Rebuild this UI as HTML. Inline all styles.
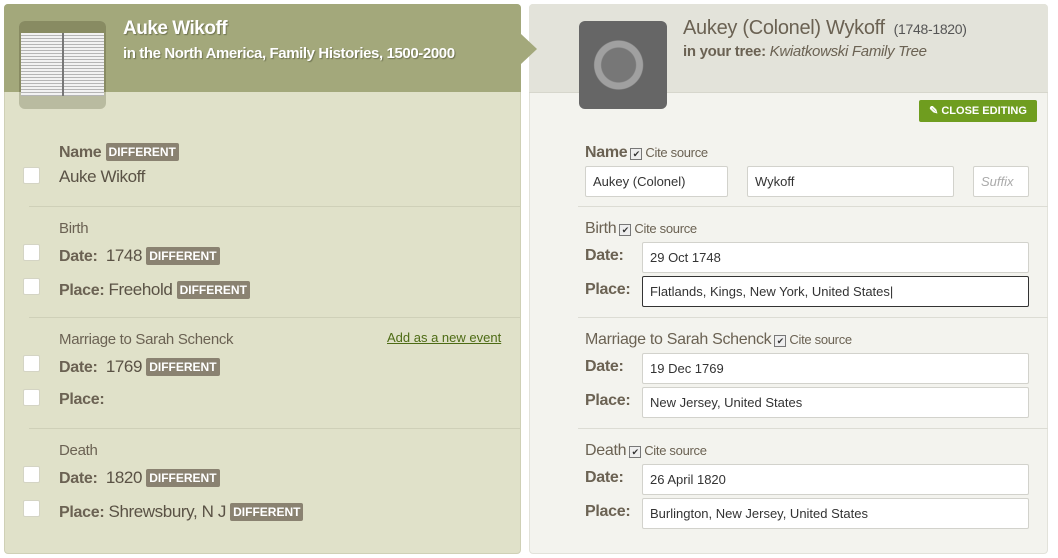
<!DOCTYPE html>
<html><head><style>
body{margin:0;width:1058px;height:558px;background:#fff;font-family:"Liberation Sans",sans-serif;position:relative;overflow:hidden}
.a{position:absolute;white-space:nowrap}
.lp{left:4px;top:4px;width:517px;height:550px;background:#e0e1c9;border-radius:4px;border:1px solid #cfd0b6;box-sizing:border-box}
.lh{left:4px;top:4px;width:517px;height:88px;background:#a3a87b;border-radius:4px 4px 0 0}
.rp{left:529px;top:4px;width:519px;height:550px;background:#f3f3ee;border-radius:4px;border:1px solid #e2e2da;box-sizing:border-box}
.rh{left:529px;top:4px;width:519px;height:88px;background:#e3e3da;border-radius:4px 4px 0 0;border-bottom:1px solid #d6d6cc}
.lbl{font-size:16px;font-weight:bold;color:#6b6253;letter-spacing:-0.3px}
.val{font-size:17px;color:#5a5245;letter-spacing:-0.4px}
.sec{font-size:15px;color:#6b6253;letter-spacing:-0.3px}
.diff{display:inline-block;background:#8a8271;color:#fff;font-size:12px;font-weight:bold;padding:2px 3px;border-radius:2px;vertical-align:1px;letter-spacing:0}
.cb{width:17px;height:17px;background:#fff;border:1px solid #d4d4c4;border-radius:2px;box-sizing:border-box}
.hr{height:1px;background:#cfd0b8}
.hr2{height:1px;background:#dcdcd4}
.in{background:#fff;border:1px solid #d2d2cc;border-radius:2px;box-sizing:border-box;font-size:13px;color:#333;padding:0 7px;line-height:30px;height:31px}
.cs{font-size:13px;color:#6b6253;font-weight:normal}
.ck{display:inline-block;width:10px;height:10px;border:1px solid #777;background:#eee;font-size:9px;line-height:10px;text-align:center;color:#333;vertical-align:0;margin:0 3px;font-weight:normal}
</style></head><body>
<div class="a lp"></div><div class="a lh"></div>
<div class="a rp"></div><div class="a rh"></div>
<svg class="a" style="left:521px;top:34px" width="18" height="30"><path d="M0 0 L16 15 L0 30Z" fill="#a3a87b"/></svg>
<div class="a" style="left:19px;top:21px;width:87px;height:88px;background:#b9bba0;border-radius:6px"></div>
<div class="a" style="left:19px;top:21px;width:87px;height:71px;background:#888b62;border-radius:6px 6px 0 0"></div>
<div class="a" style="left:21px;top:33px;width:83px;height:63px;background:repeating-linear-gradient(#f2f2f2 0 2px,#b5b5b5 2px 3px)"></div>
<div class="a" style="left:62px;top:33px;width:2px;height:63px;background:#777"></div>
<div class="a" style="left:123px;top:18px;font-size:19px;font-weight:bold;color:#fff;text-shadow:1px 1px 1px #6f7350;letter-spacing:-0.5px">Auke Wikoff</div>
<div class="a" style="left:123px;top:45px;font-size:15px;font-weight:bold;color:#fff;text-shadow:1px 1px 1px #6f7350;letter-spacing:-0.4px">in the North America, Family Histories, 1500-2000</div>
<div class="a" style="left:579px;top:21px;width:88px;height:88px;border-radius:6px;background:radial-gradient(circle at 45% 50%,#777 0 17px,#a0a0a0 18px 24px,#666 25px)"></div>
<div class="a" style="left:683px;top:17px;font-size:20px;color:#6b6253;letter-spacing:-0.3px">Aukey (Colonel) Wykoff <span style="font-size:14px;color:#555">&nbsp;(1748-1820)</span></div>
<div class="a" style="left:683px;top:43px;font-size:15px;font-weight:bold;color:#6b6253;letter-spacing:-0.3px">in your tree: <i style="font-weight:normal">Kwiatkowski Family Tree</i></div>
<div class="a" style="left:919px;top:100px;width:118px;height:22px;background:#6f9d1f;border-radius:2px;color:#fff;font-size:11px;font-weight:bold;line-height:22px;text-align:center">✎ CLOSE EDITING</div>
<div class="a lbl" style="left:59px;top:143px">Name <span class="diff">DIFFERENT</span></div>
<div class="a cb" style="left:23px;top:167px"></div>
<div class="a val" style="left:59px;top:167px">Auke Wikoff</div>
<div class="a hr" style="left:29px;top:206px;width:492px"></div>
<div class="a sec" style="left:59px;top:220px">Birth</div>
<div class="a cb" style="left:23px;top:244px"></div>
<div class="a lbl" style="left:59px;top:246px">Date:&nbsp; <span class="val" style="font-weight:normal">1748</span> <span class="diff">DIFFERENT</span></div>
<div class="a cb" style="left:23px;top:278px"></div>
<div class="a lbl" style="left:59px;top:280px">Place: <span class="val" style="font-weight:normal">Freehold</span> <span class="diff">DIFFERENT</span></div>
<div class="a hr" style="left:29px;top:317px;width:492px"></div>
<div class="a sec" style="left:59px;top:331px">Marriage to Sarah Schenck</div>
<div class="a" style="left:387px;top:330px;font-size:13px;color:#4d6b14;text-decoration:underline">Add as a new event</div>
<div class="a cb" style="left:23px;top:355px"></div>
<div class="a lbl" style="left:59px;top:357px">Date:&nbsp; <span class="val" style="font-weight:normal">1769</span> <span class="diff">DIFFERENT</span></div>
<div class="a cb" style="left:23px;top:389px"></div>
<div class="a lbl" style="left:59px;top:391px">Place:</div>
<div class="a hr" style="left:29px;top:428px;width:492px"></div>
<div class="a sec" style="left:59px;top:442px">Death</div>
<div class="a cb" style="left:23px;top:466px"></div>
<div class="a lbl" style="left:59px;top:468px">Date:&nbsp; <span class="val" style="font-weight:normal">1820</span> <span class="diff">DIFFERENT</span></div>
<div class="a cb" style="left:23px;top:500px"></div>
<div class="a lbl" style="left:59px;top:502px">Place: <span class="val" style="font-weight:normal">Shrewsbury, N J</span> <span class="diff">DIFFERENT</span></div>
<div class="a lbl" style="left:585px;top:144px">Name<span class="ck">✔</span><span class="cs">Cite source</span></div>
<div class="a in" style="left:585px;top:166px;width:143px">Aukey (Colonel)</div>
<div class="a in" style="left:747px;top:166px;width:207px">Wykoff</div>
<div class="a in" style="left:973px;top:166px;width:56px;color:#aaa;font-style:italic">Suffix</div>
<div class="a hr2" style="left:578px;top:206px;width:470px"></div>
<div class="a lbl" style="left:585px;top:220px;font-weight:normal">Birth<span class="ck">✔</span><span class="cs">Cite source</span></div>
<div class="a lbl" style="left:585px;top:247px">Date:</div>
<div class="a in" style="left:642px;top:242px;width:387px">29 Oct 1748</div>
<div class="a lbl" style="left:585px;top:281px">Place:</div>
<div class="a in" style="left:642px;top:276px;width:387px;border-color:#333">Flatlands, Kings, New York, United States|</div>
<div class="a hr2" style="left:578px;top:317px;width:470px"></div>
<div class="a lbl" style="left:585px;top:331px;font-weight:normal">Marriage to Sarah Schenck<span class="ck">✔</span><span class="cs">Cite source</span></div>
<div class="a lbl" style="left:585px;top:358px">Date:</div>
<div class="a in" style="left:642px;top:353px;width:387px">19 Dec 1769</div>
<div class="a lbl" style="left:585px;top:392px">Place:</div>
<div class="a in" style="left:642px;top:387px;width:387px">New Jersey, United States</div>
<div class="a hr2" style="left:578px;top:428px;width:470px"></div>
<div class="a lbl" style="left:585px;top:442px;font-weight:normal">Death<span class="ck">✔</span><span class="cs">Cite source</span></div>
<div class="a lbl" style="left:585px;top:469px">Date:</div>
<div class="a in" style="left:642px;top:464px;width:387px">26 April 1820</div>
<div class="a lbl" style="left:585px;top:503px">Place:</div>
<div class="a in" style="left:642px;top:498px;width:387px">Burlington, New Jersey, United States</div>
</body></html>
